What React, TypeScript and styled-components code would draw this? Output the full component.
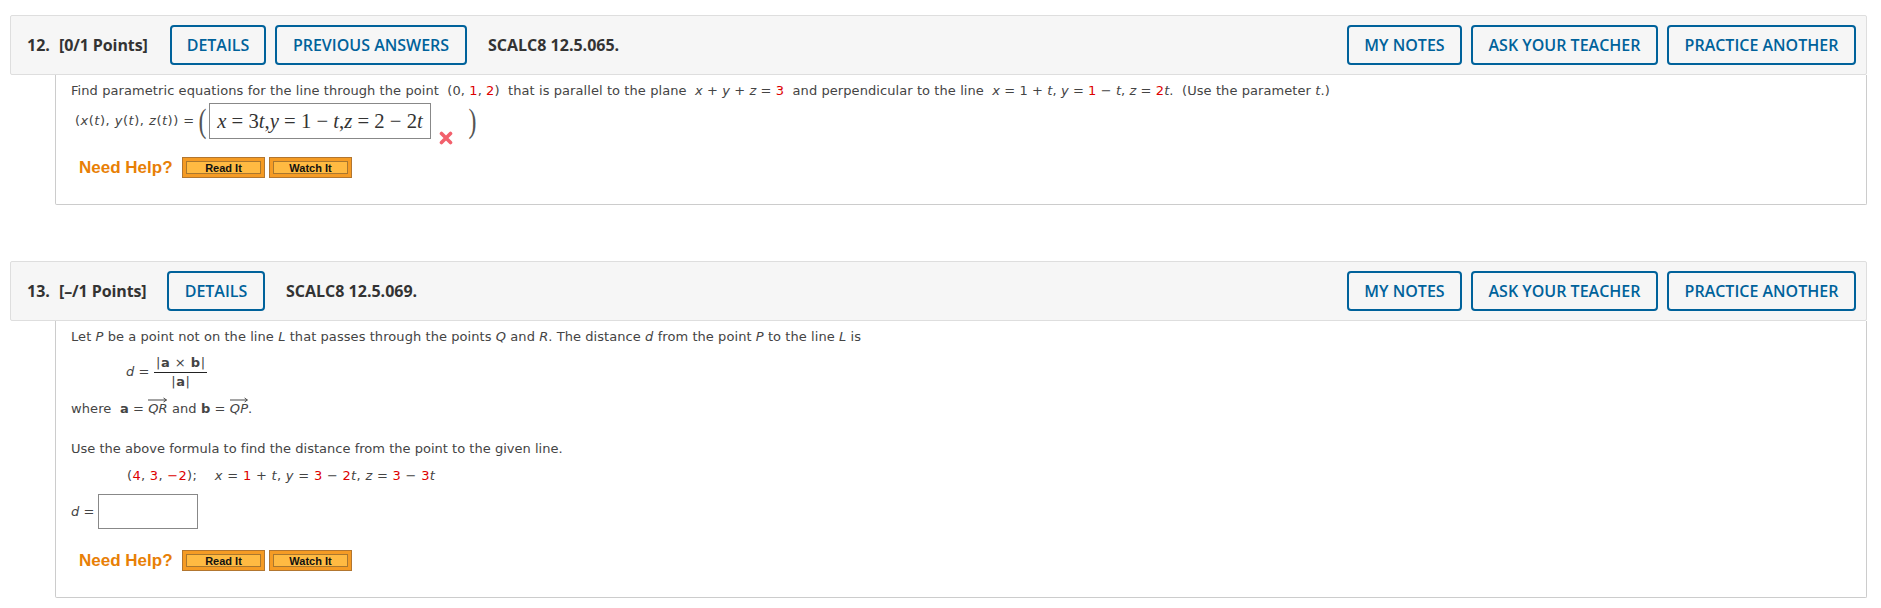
import React from "react";
import styled, { createGlobalStyle } from "styled-components";

const Global = createGlobalStyle`
  html, body { margin: 0; padding: 0; background: #fff; }
  body { font-family: "DejaVu Sans", Verdana, sans-serif; color: #444; }
`;
const Page = styled.div`
  padding: 15px 14px 11px 10px;
`;
const Question = styled.section<{ $gap?: number }>`
  margin-bottom: ${(p) => p.$gap ?? 0}px;
`;
const Header = styled.header<{ $h: number }>`
  box-sizing: border-box;
  height: ${(p) => p.$h}px;
  display: flex;
  align-items: center;
  background: #f6f6f6;
  border: 1px solid #dedede;
  border-radius: 2px;
  padding: 0 10px 0 16px;
  font-family: "Open Sans", sans-serif;
  font-size: 16px;
`;
const Num = styled.span`
  font-weight: 700;
  color: #333;
  width: 32px;
`;
const Points = styled.span<{ $w: number }>`
  font-weight: 700;
  color: #333;
  letter-spacing: -0.1px;
  width: ${(p) => p.$w}px;
`;
const Btn = styled.button<{ $w: number }>`
  box-sizing: border-box;
  width: ${(p) => p.$w}px;
  height: 40px;
  padding: 0;
  background: transparent;
  border: 2px solid #00629b;
  border-radius: 4px;
  color: #00629b;
  font: 600 16px "Open Sans", sans-serif;
  margin-right: 9px;
  &:last-child { margin-right: 0; }
`;
const Title = styled.span`
  font-weight: 700;
  color: #333;
  margin-left: 12px;
`;
const Right = styled.div`
  margin-left: auto;
  display: flex;
`;
const Body = styled.div<{ $top: number }>`
  margin-left: 45px;
  padding: ${(p) => p.$top}px 0 26px 15px;
  border: 1px solid #ccc;
  border-top: none;
  border-radius: 0 0 2px 2px;
  font-size: 13px;
  line-height: 18px;
`;
const Line = styled.div<{ $mt?: number; $indent?: number; $ls?: number }>`
  margin-top: ${(p) => p.$mt ?? 0}px;
  padding-left: ${(p) => p.$indent ?? 0}px;
  letter-spacing: ${(p) => p.$ls ?? 0.07}px;
  white-space: pre;
`;
const R = styled.span`
  color: #d00;
`;
const I = styled.i``;
const AnswerRow = styled.div`
  display: flex;
  align-items: center;
  margin-top: 3px;
  height: 36px;
  padding-left: 4px;
`;
const Lhs = styled.span`
  white-space: pre;
  width: 122px;
  letter-spacing: 0.5px;
`;
const Paren = styled.span<{ $before?: number; $after?: number }>`
  font: 300 34px/36px "Liberation Serif", serif;
  color: #555;
  transform: scaleX(0.7);
  width: 10px;
  margin-left: ${(p) => p.$before ?? 0}px;
  margin-right: ${(p) => p.$after ?? 0}px;
  text-align: center;
`;
const MathBox = styled.div`
  box-sizing: border-box;
  width: 222px;
  height: 36px;
  border: 1px solid #888;
  display: flex;
  align-items: center;
  justify-content: center;
  font: 20.7px "Liberation Serif", serif;
  color: #333;
  white-space: pre;
`;
const Cross = styled.svg`
  margin: 33px 0 0 8px;
  flex: none;
`;
const HelpRow = styled.div<{ $mt: number }>`
  display: flex;
  align-items: center;
  margin-top: ${(p) => p.$mt}px;
  padding-left: 8px;
  height: 21px;
`;
const HelpLabel = styled.span`
  font: 700 17px "Liberation Sans", sans-serif;
  color: #e87f06;
  width: 103px;
  white-space: nowrap;
`;
const HelpBtn = styled.button`
  box-sizing: border-box;
  width: 83px;
  height: 21px;
  margin-right: 4px;
  padding: 0;
  background: #ffba42;
  border: 1px solid #b27630;
  outline: none;
  box-shadow: inset 0 0 0 3px #f59b24, inset 0 0 0 4px #a9772f;
  color: #111;
  font: 700 11px "Liberation Sans", sans-serif;
`;
const Fraction = styled.span`
  display: inline-flex;
  flex-direction: column;
  align-items: center;
  width: 53px;
  margin-left: 5px;
  letter-spacing: 0.5px;
`;
const Numerator = styled.span`
  border-bottom: 1px solid #222;
  width: 100%;
  text-align: center;
  line-height: 18px;
`;
const Denominator = styled.span`
  line-height: 17px;
`;
const FractionRow = styled.div`
  display: flex;
  align-items: center;
  margin-top: 9px;
  padding-left: 55px;
  height: 34px;
  white-space: pre;
`;
const Vec = styled.span`
  position: relative;
  display: inline-block;
`;
const VecArrow = styled.svg`
  position: absolute;
  left: 0;
  top: -3px;
  width: 100%;
  height: 6px;
`;
const DRow = styled.div`
  display: flex;
  align-items: center;
  margin-top: 9px;
  height: 35px;
  white-space: pre;
`;
const Blank = styled.div`
  box-sizing: border-box;
  width: 100px;
  height: 35px;
  margin-left: 4px;
  border: 1px solid #888;
`;

const Vector = ({ children }: { children: React.ReactNode }) => (
  <Vec>
    {children}
    <VecArrow viewBox="0 0 20 6" preserveAspectRatio="none">
      <path d="M0 3H19M16 1l3 2-3 2" fill="none" stroke="#444" strokeWidth="1" />
    </VecArrow>
  </Vec>
);

const RightButtons = () => (
  <Right>
    <Btn $w={115}>MY NOTES</Btn>
    <Btn $w={187}>ASK YOUR TEACHER</Btn>
    <Btn $w={189}>PRACTICE ANOTHER</Btn>
  </Right>
);

const Help = ({ mt }: { mt: number }) => (
  <HelpRow $mt={mt}>
    <HelpLabel>Need Help?</HelpLabel>
    <HelpBtn>Read It</HelpBtn>
    <HelpBtn>Watch It</HelpBtn>
  </HelpRow>
);

export default function App() {
  return (
    <>
      <Global />
      <Page>
        <Question $gap={56}>
          <Header $h={60}>
            <Num>12.</Num>
            <Points $w={111}>[0/1 Points]</Points>
            <Btn $w={96}>DETAILS</Btn>
            <Btn $w={192}>PREVIOUS ANSWERS</Btn>
            <Title>SCALC8 12.5.065.</Title>
            <RightButtons />
          </Header>
          <Body $top={7}>
            <Line $ls={0.08}>
              Find parametric equations for the line through the point  (0, <R>1</R>, <R>2</R>)  that is parallel to the plane  <I>x</I> + <I>y</I> + <I>z</I> = <R>3</R>  and perpendicular to the line  <I>x</I> = 1 + <I>t</I>, <I>y</I> = <R>1</R> − <I>t</I>, <I>z</I> = <R>2</R><I>t</I>.  (Use the parameter <I>t</I>.)
            </Line>
            <AnswerRow>
              <Lhs>(<I>x</I>(<I>t</I>), <I>y</I>(<I>t</I>), <I>z</I>(<I>t</I>)) =</Lhs>
              <Paren $after={2}>(</Paren>
              <MathBox>
                <I>x</I> = 3<I>t</I>,<I>y</I> = 1 − <I>t</I>,<I>z</I> = 2 − 2<I>t</I>
              </MathBox>
              <Cross width="14" height="14" viewBox="0 0 14 14">
                <path d="M2.5 2.5L11.5 11.5M11.5 2.5L2.5 11.5" stroke="#f2606c" strokeWidth="3.6" strokeLinecap="round" fill="none" />
              </Cross>
              <Paren $before={14}>)</Paren>
            </AnswerRow>
            <Help mt={18} />
          </Body>
        </Question>
        <Question>
          <Header $h={60}>
            <Num>13.</Num>
            <Points $w={108}>[–/1 Points]</Points>
            <Btn $w={98}>DETAILS</Btn>
            <Title>SCALC8 12.5.069.</Title>
            <RightButtons />
          </Header>
          <Body $top={7}>
            <Line>
              Let <I>P</I> be a point not on the line <I>L</I> that passes through the points <I>Q</I> and <I>R</I>. The distance <I>d</I> from the point <I>P</I> to the line <I>L</I> is
            </Line>
            <FractionRow>
              <I>d</I> =
              <Fraction>
                <Numerator>|<b>a</b> × <b>b</b>|</Numerator>
                <Denominator>|<b>a</b>|</Denominator>
              </Fraction>
            </FractionRow>
            <Line $mt={11} $ls={0.1}>
              where  <b>a</b> = <Vector><I>QR</I></Vector> and <b>b</b> = <Vector><I>QP</I></Vector>.
            </Line>
            <Line $mt={22} $ls={0.02}>Use the above formula to find the distance from the point to the given line.</Line>
            <Line $mt={9} $indent={56} $ls={0.3}>
              (<R>4</R>, <R>3</R>, <R>−2</R>);    <I>x</I> = <R>1</R> + <I>t</I>, <I>y</I> = <R>3</R> − <R>2</R><I>t</I>, <I>z</I> = <R>3</R> − <R>3</R><I>t</I>
            </Line>
            <DRow>
              <I>d</I> =<Blank />
            </DRow>
            <Help mt={21} />
          </Body>
        </Question>
      </Page>
    </>
  );
}
